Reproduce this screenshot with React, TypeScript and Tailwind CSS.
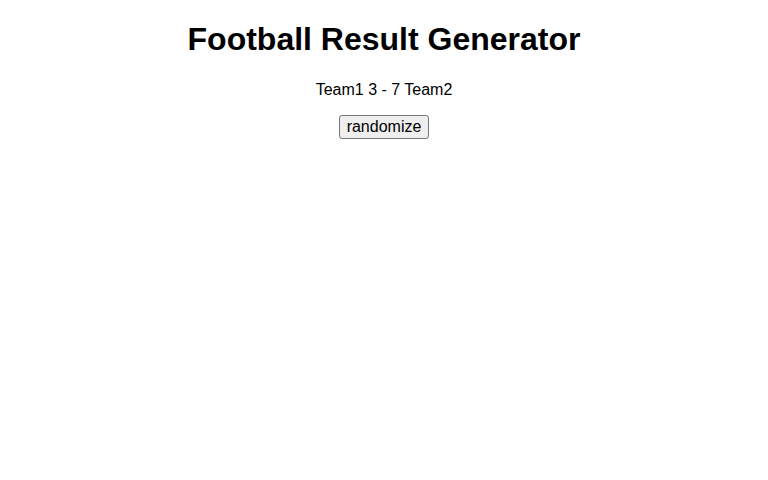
import { useState } from "react";

const randomGoals = () => Math.floor(Math.random() * 10);

export default function App() {
  const [score, setScore] = useState<[number, number]>([3, 7]);

  const randomize = () => {
    setScore([randomGoals(), randomGoals()]);
  };

  return (
    <div className="min-h-screen bg-white text-center text-black font-['Liberation_Sans',Arial,sans-serif]">
      <h1 className="pt-[21px] mb-[22px] text-[32px] leading-[37px] font-bold">Football Result Generator</h1>
      <p className="mb-4 text-base leading-[19px]">
        Team1 {score[0]} - {score[1]} Team2
      </p>
      <button
        onClick={randomize}
        className="px-[7px] py-[2px] text-base leading-[18px] bg-[#efefef] border border-[#767676] rounded-[3px] hover:bg-[#e5e5e5]"
      >
        randomize
      </button>
    </div>
  );
}
